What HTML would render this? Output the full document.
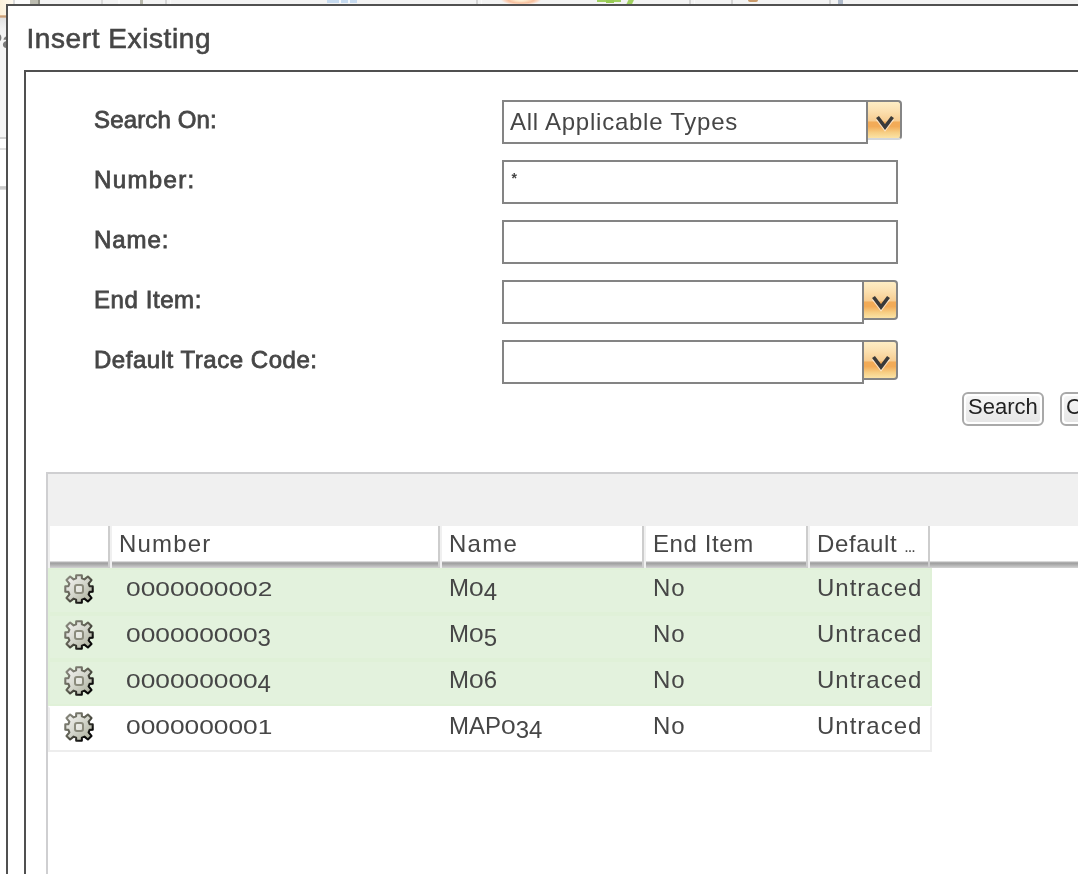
<!DOCTYPE html>
<html lang="en">
<head>
<meta charset="utf-8">
<title>Insert Existing</title>
<style>
html,body{margin:0;padding:0;}
body{width:1078px;height:874px;overflow:hidden;background:#fff;position:relative;
  font-family:"Liberation Sans",sans-serif;color:#464646;}
.abs{position:absolute;}
#wrap{position:absolute;left:0;top:0;width:1078px;height:874px;overflow:hidden;will-change:transform;}
/* background application chrome peeking out behind the dialog */
#topstrip{left:0;top:0;width:1078px;height:4px;background:#f3f3f3;}
#leftstrip{left:0;top:0;width:6px;height:874px;background:#fff;}
/* dialog */
#dialog{left:6px;top:4px;width:1100px;height:900px;border:2px solid #505050;background:#fff;box-sizing:border-box;}
#title{left:26.5px;top:22px;letter-spacing:0.58px;font-size:28px;line-height:34px;white-space:nowrap;color:#464646;-webkit-text-stroke:0.6px #464646;}
#inner{left:24px;top:70px;width:1100px;height:900px;border:2px solid #505050;background:#fff;box-sizing:border-box;}
.lbl{left:94px;font-size:24px;line-height:28px;white-space:nowrap;font-weight:normal;color:#464646;-webkit-text-stroke:0.8px #464646;letter-spacing:0.7px;}
.inp{box-sizing:border-box;border:2px solid #848484;background:#fff;height:44px;font-size:24px;line-height:28px;white-space:nowrap;color:#464646;}
.trig{width:34px;height:40px;box-sizing:border-box;border:2px solid #858585;border-left:none;border-radius:0 4px 4px 0;
  background:linear-gradient(to bottom,#feedc4 0%,#fbe0b0 25%,#f7cd92 52%,#f2ab58 56%,#f2ab58 68%,#f7cf85 85%,#fbe3a6 100%);}
.btn{box-sizing:border-box;height:34px;border:2px solid #a9a9a9;border-radius:6px;background:#fff;padding:2px;}
.btn span{display:block;box-sizing:border-box;height:26px;border-radius:3px;background:linear-gradient(to bottom,#f6f6f6,#e6e6e6);
  font-family:"Liberation Sans",sans-serif;font-size:22px;line-height:22px;color:#222;white-space:nowrap;padding:0 2px;}
/* grid */
#grid{left:46px;top:472px;width:1100px;height:500px;border:2px solid #cfcfd1;box-sizing:border-box;background:#fff;}
#gtb{left:48px;top:474px;width:1030px;height:94px;background:#f0f0f0;}
#ghd{left:50px;top:526px;width:1028px;height:42px;background:#fff;}
#hshadow{left:50px;top:561px;width:1030px;height:7px;background:linear-gradient(to bottom,#f4f4f4 0,#bdbdbd 1px,#9f9f9f 2px,#a6a6a6 3px,#bcbcbc 5px,#d4d4d4 7px);}
.hsep{top:526px;width:2px;height:42px;background:#cdcdcd;border-right:2px solid #f0f0f0;}
.hc{top:530px;font-size:24px;line-height:28px;white-space:nowrap;color:#464646;}
.row{left:48px;width:884px;height:46px;box-sizing:border-box;border:2px solid #ededed;border-top-color:#fff;}
.sel{background:#e3f2dd;border-color:#e0f1d8;}
.d{display:inline-block;font-size:20px;letter-spacing:0;transform:scaleX(1.315);transform-origin:0 50%;}
.lo{position:relative;top:4px;letter-spacing:0;}
.hi{letter-spacing:0;}
.c{font-size:24px;line-height:28px;white-space:nowrap;color:#464646;}
</style>
</head>
<body>
<svg width="0" height="0" style="position:absolute">
<defs>
<linearGradient id="gf" x1="0" y1="0" x2="1" y2="1"><stop offset="0.15" stop-color="#ededea"/><stop offset="0.5" stop-color="#d3d5cb"/><stop offset="0.9" stop-color="#aeb19f"/></linearGradient>
<linearGradient id="gs" x1="0" y1="0" x2="1" y2="1"><stop offset="0.1" stop-color="#85857a"/><stop offset="0.5" stop-color="#5a5a4e"/><stop offset="0.8" stop-color="#0a0a0a"/></linearGradient>
<symbol id="gear" viewBox="0 0 30 30">
<path d="M12.1 4.4 L12.2 1.3 L17.8 1.3 L17.9 4.4 L20.4 5.4 L23.9 2.5 L27.5 6.1 L24.6 9.6 L25.6 12.1 L28.7 12.2 L28.7 17.8 L25.6 17.9 L24.6 20.4 L27.5 23.9 L23.9 27.5 L20.4 24.6 L17.9 25.6 L17.8 28.7 L12.2 28.7 L12.1 25.6 L9.6 24.6 L6.1 27.5 L2.5 23.9 L5.4 20.4 L4.4 17.9 L1.3 17.8 L1.3 12.2 L4.4 12.1 L5.4 9.6 L2.5 6.1 L6.1 2.5 L9.6 5.4Z" fill="url(#gf)" stroke="url(#gs)" stroke-width="2.1" stroke-linejoin="round"/>
<rect x="11" y="11" width="8" height="8" rx="2" fill="#ffffff" fill-opacity="0.45" stroke="#8a8a7c" stroke-width="2"/>
</symbol>
</defs>
</svg>
<div id="wrap">
<div id="topstrip" class="abs"></div>
<div id="leftstrip" class="abs"></div>
<div class="abs" style="left:0;top:0;width:14px;height:16px;background:linear-gradient(to right,#fcf1da,#fffaf0)"></div>
<div class="abs" style="left:0;top:15px;width:6px;height:3px;background:linear-gradient(to bottom,#e9c9a4,#c9a07a 50%,#dcc3ae)"></div>
<div class="abs" style="left:0;top:18px;width:6px;height:120px;background:linear-gradient(to bottom,#e2e2e2 0,#f0f0f0 10px,#f5f5f5 20px)"></div>
<div class="abs" style="left:0;top:137px;width:6px;height:2px;background:#d2d2d2"></div>
<div class="abs" style="left:0;top:148px;width:6px;height:2px;background:#e2e2e2"></div>
<div class="abs" style="left:0;top:186px;width:6px;height:4px;background:linear-gradient(to bottom,#d6d6d6,#c6c6c6 50%,#e4e4e4)"></div>
<div class="abs" style="left:0;top:20px;width:6px;height:40px;overflow:hidden"><div class="abs" style="left:-12.5px;top:8px;font-size:22px;line-height:26px;font-weight:bold;color:#7c7c7c;white-space:nowrap">Pa</div></div>
<div class="abs" style="left:13px;top:0;width:2px;height:4px;background:#dcdcdc"></div>
<div class="abs" style="left:15px;top:0;width:15px;height:4px;background:#fcfcfc"></div>
<div class="abs" style="left:30px;top:0;width:9px;height:4px;background:#bcbcb0"></div>
<div class="abs" style="left:38px;top:0;width:2px;height:4px;background:#8f8f84"></div>
<div class="abs" style="left:101px;top:0;width:2px;height:4px;background:#dadada"></div>
<div class="abs" style="left:118px;top:0;width:2px;height:4px;background:#fafafa"></div>
<div class="abs" style="left:140px;top:0;width:3px;height:4px;background:#b7b7aa"></div>
<div class="abs" style="left:165px;top:0;width:2px;height:4px;background:#d6d6d6"></div>
<div class="abs" style="left:170px;top:0;width:1px;height:4px;background:#fafafa"></div>
<div class="abs" style="left:476px;top:0;width:2px;height:4px;background:#d4d4d4"></div>
<div class="abs" style="left:481px;top:0;width:1px;height:4px;background:#fafafa"></div>
<div class="abs" style="left:689px;top:0;width:2px;height:4px;background:#d4d4d4"></div>
<div class="abs" style="left:694px;top:0;width:1px;height:4px;background:#fafafa"></div>
<div class="abs" style="left:731px;top:0;width:2px;height:4px;background:#d4d4d4"></div>
<div class="abs" style="left:829px;top:0;width:2px;height:4px;background:#d4d4d4"></div>
<div class="abs" style="left:838px;top:0;width:5px;height:4px;background:#aeb9c9"></div>
<div class="abs" style="left:327px;top:0;width:30px;height:3px;background:linear-gradient(to right,#c6daef 0,#c6daef 12px,#f4f8fc 12px,#f4f8fc 14px,#c6daef 14px,#c6daef 21px,#f4f8fc 21px,#f4f8fc 23px,#c6daef 23px)"></div>
<div class="abs" style="left:501px;top:0;width:40px;height:4px;background:radial-gradient(ellipse 20px 5px at 50% 0,#fff4dc 0,#fde3c4 30%,#f8bf9c 62%,#fadccb 85%,#f3f3f3 100%)"></div>
<div class="abs" style="left:597px;top:0;width:24px;height:2px;background:#a0d060"></div>
<div class="abs" style="left:606px;top:0;width:8px;height:3px;background:#98cb55"></div>
<div class="abs" style="left:626px;top:0;width:10px;height:4px;background:linear-gradient(115deg,#f3f3f3 0,#f3f3f3 15%,#a0d060 25%,#a0d060 62%,#f3f3f3 72%)"></div>
<div class="abs" style="left:748px;top:0;width:10px;height:2px;background:#c99a6a;border-radius:0 0 4px 4px"></div>
<div id="dialog" class="abs"></div>
<div id="title" class="abs">Insert Existing</div>
<div id="inner" class="abs"></div>
<div class="abs lbl" style="top:106px;letter-spacing:0.15px">Search On:</div>
<div class="abs lbl" style="top:166px;letter-spacing:1.37px">Number:</div>
<div class="abs lbl" style="top:226px;letter-spacing:0.95px">Name:</div>
<div class="abs lbl" style="top:286px;letter-spacing:0.58px">End Item:</div>
<div class="abs lbl" style="top:346px;letter-spacing:0.53px">Default Trace Code:</div>
<div class="abs inp" style="left:502px;top:100px;width:366px;padding:6px 0 0 6px;letter-spacing:0.75px">All Applicable Types</div>
<div class="abs trig" style="left:868px;top:100px;border-bottom-color:#d3d6da"><svg width="32" height="36" viewBox="0 0 32 36" style="display:block"><path d="M9.5 15 L17 25 L24.5 15" fill="none" stroke="#fff" stroke-opacity="0.6" stroke-width="3.6" transform="translate(0,1.8)"/><path d="M9.5 15 L17 25 L24.5 15" fill="none" stroke="#3a3a3a" stroke-width="3.6" stroke-linejoin="miter"/></svg></div>
<div class="abs inp" style="left:502px;top:160px;width:396px;padding:1.5px 0 0 7.5px;font-size:14px;font-weight:bold">*</div>
<div class="abs inp" style="left:502px;top:220px;width:396px"></div>
<div class="abs inp" style="left:502px;top:280px;width:362px"></div>
<div class="abs trig" style="left:864px;top:280px"><svg width="32" height="36" viewBox="0 0 32 36" style="display:block"><path d="M9.5 15 L17 25 L24.5 15" fill="none" stroke="#fff" stroke-opacity="0.6" stroke-width="3.6" transform="translate(0,1.8)"/><path d="M9.5 15 L17 25 L24.5 15" fill="none" stroke="#3a3a3a" stroke-width="3.6" stroke-linejoin="miter"/></svg></div>
<div class="abs inp" style="left:502px;top:340px;width:362px"></div>
<div class="abs trig" style="left:864px;top:340px"><svg width="32" height="36" viewBox="0 0 32 36" style="display:block"><path d="M9.5 15 L17 25 L24.5 15" fill="none" stroke="#fff" stroke-opacity="0.6" stroke-width="3.6" transform="translate(0,1.8)"/><path d="M9.5 15 L17 25 L24.5 15" fill="none" stroke="#3a3a3a" stroke-width="3.6" stroke-linejoin="miter"/></svg></div>
<div class="abs btn" style="left:962px;top:392px;width:82px"><span>Search</span></div>
<div class="abs btn" style="left:1060px;top:392px;width:80px"><span>Cancel</span></div>
<div id="grid" class="abs"></div>
<div id="gtb" class="abs"></div>
<div id="ghd" class="abs"></div>
<div class="abs" id="hshadow"></div>
<div class="abs hsep" style="left:108px"></div>
<div class="abs hsep" style="left:438px"></div>
<div class="abs hsep" style="left:642px"></div>
<div class="abs hsep" style="left:806px"></div>
<div class="abs hsep" style="left:928px;border-right:none"></div>
<div class="abs hc" style="left:119px;letter-spacing:1.17px">Number</div>
<div class="abs hc" style="left:449px;letter-spacing:1.25px">Name</div>
<div class="abs hc" style="left:653px;letter-spacing:0.6px">End Item</div>
<div class="abs hc" style="left:817px;letter-spacing:0.6px">Default <span style="font-size:11px;font-weight:bold;letter-spacing:0">…</span></div>
<div class="abs row sel" style="top:568px"></div>
<svg class="abs" style="left:64px;top:574px" width="30" height="30"><use href="#gear"/></svg>
<div class="abs c" style="left:126px;top:574px"><span class="d" style="margin-right:35.0px">0000000002</span></div>
<div class="abs c" style="left:449px;top:574px">M<span class="d" style="margin-right:3.5px">0</span><span class="lo">4</span></div>
<div class="abs c" style="left:653px;top:574px;letter-spacing:1px">No</div>
<div class="abs c" style="left:817px;top:574px;letter-spacing:1px">Untraced</div>
<div class="abs row sel" style="top:614px"></div>
<svg class="abs" style="left:64px;top:620px" width="30" height="30"><use href="#gear"/></svg>
<div class="abs c" style="left:126px;top:620px"><span class="d" style="margin-right:31.5px">000000000</span><span class="lo">3</span></div>
<div class="abs c" style="left:449px;top:620px">M<span class="d" style="margin-right:3.5px">0</span><span class="lo">5</span></div>
<div class="abs c" style="left:653px;top:620px;letter-spacing:1px">No</div>
<div class="abs c" style="left:817px;top:620px;letter-spacing:1px">Untraced</div>
<div class="abs row sel" style="top:660px"></div>
<svg class="abs" style="left:64px;top:666px" width="30" height="30"><use href="#gear"/></svg>
<div class="abs c" style="left:126px;top:666px"><span class="d" style="margin-right:31.5px">000000000</span><span class="lo">4</span></div>
<div class="abs c" style="left:449px;top:666px">M<span class="d" style="margin-right:3.5px">0</span><span class="hi">6</span></div>
<div class="abs c" style="left:653px;top:666px;letter-spacing:1px">No</div>
<div class="abs c" style="left:817px;top:666px;letter-spacing:1px">Untraced</div>
<div class="abs row" style="top:706px"></div>
<svg class="abs" style="left:64px;top:712px" width="30" height="30"><use href="#gear"/></svg>
<div class="abs c" style="left:126px;top:712px"><span class="d" style="margin-right:35.0px">0000000001</span></div>
<div class="abs c" style="left:449px;top:712px">MAP<span class="d" style="margin-right:3.5px">0</span><span class="lo">3</span><span class="lo">4</span></div>
<div class="abs c" style="left:653px;top:712px;letter-spacing:1px">No</div>
<div class="abs c" style="left:817px;top:712px;letter-spacing:1px">Untraced</div>
</div>
</body>
</html>
